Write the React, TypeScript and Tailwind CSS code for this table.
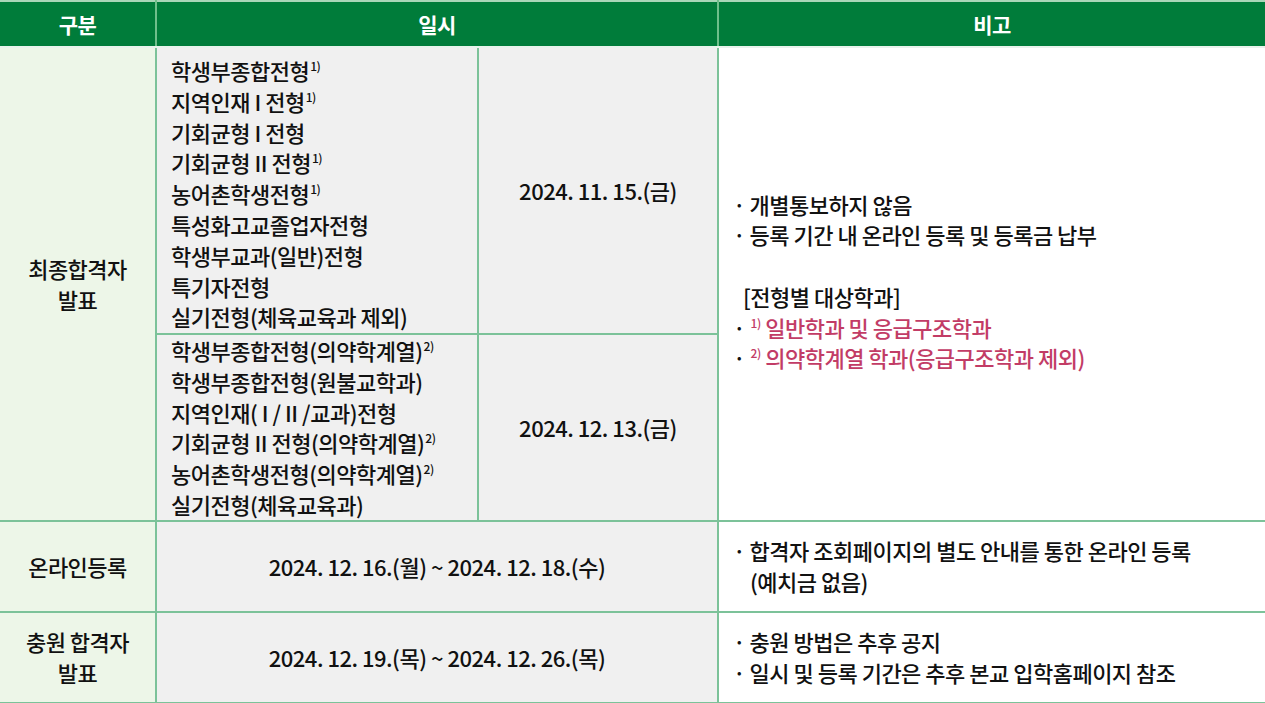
import React from "react";

const B = "border-2 border-[#7cc299]";
const font = { fontFamily: '"Noto Sans CJK KR", "Noto Sans", sans-serif' };

function Sup({ n }: { n: string }) {
  return <span className="text-[12px] leading-none relative -top-[9px] ml-[1px]">{n})</span>;
}

export default function App() {
  const list1: [string, string?][] = [
    ["학생부종합전형", "1"],
    ["지역인재 I 전형", "1"],
    ["기회균형 I 전형"],
    ["기회균형 II 전형", "1"],
    ["농어촌학생전형", "1"],
    ["특성화고교졸업자전형"],
    ["학생부교과(일반)전형"],
    ["특기자전형"],
    ["실기전형(체육교육과 제외)"],
  ];
  const list2: [string, string?][] = [
    ["학생부종합전형(의약학계열)", "2"],
    ["학생부종합전형(원불교학과)"],
    ["지역인재( I / II /교과)전형"],
    ["기회균형 II 전형(의약학계열)", "2"],
    ["농어촌학생전형(의약학계열)", "2"],
    ["실기전형(체육교육과)"],
  ];
  return (
    <div className="w-[1265px] h-[703px] bg-white overflow-hidden text-[#111] tracking-[-0.5px]" style={font}>
      <table className="table-fixed border-collapse w-[1265px] text-[22px] leading-[30.8px] font-medium">
        <colgroup>
          <col className="w-[156px]" />
          <col className="w-[322px]" />
          <col className="w-[240px]" />
          <col className="w-[547px]" />
        </colgroup>
        <thead>
          <tr className="h-[46px] bg-[#007c3a] text-white border-t-2 border-t-[#a9d6b8]">
            <th className="font-bold text-[21px] border-r-2 border-r-[#6fbf8b] border-b-2 border-b-[#e8f3ec]">구분</th>
            <th colSpan={2} className="font-bold text-[21px] border-r-2 border-r-[#6fbf8b] border-b-2 border-b-[#e8f3ec]">일시</th>
            <th className="font-bold text-[21px] border-b-2 border-b-[#e8f3ec]">비고</th>
          </tr>
        </thead>
        <tbody>
          <tr className="h-[287px]">
            <td rowSpan={2} className={`${B} border-l-0 bg-[#edf6e8] text-center align-middle`}>
              최종합격자
              <br />
              발표
            </td>
            <td className={`${B} bg-[#f0f0f0] align-top pl-[14px] pt-[7px]`}>
              {list1.map(([t, s], i) => (
                <div key={i} className="whitespace-nowrap">
                  {t}
                  {s && <Sup n={s} />}
                </div>
              ))}
            </td>
            <td className={`${B} bg-[#f0f0f0] text-center align-middle`}>2024. 11. 15.(금)</td>
            <td rowSpan={2} className={`${B} border-r-0 bg-white align-middle pl-[14px] pb-[6px]`}>
              <div>· 개별통보하지 않음</div>
              <div>· 등록 기간 내 온라인 등록 및 등록금 납부</div>
              <div>&nbsp;</div>
              <div className="pl-[10px]">[전형별 대상학과]</div>
              <div>
                · <span className="text-[#c23c66]"><Sup n="1" /> 일반학과 및 응급구조학과</span>
              </div>
              <div>
                · <span className="text-[#c23c66]"><Sup n="2" /> 의약학계열 학과(응급구조학과 제외)</span>
              </div>
            </td>
          </tr>
          <tr className="h-[186px]">
            <td className={`${B} bg-[#f0f0f0] align-middle pl-[14px]`}>
              {list2.map(([t, s], i) => (
                <div key={i} className="whitespace-nowrap">
                  {t}
                  {s && <Sup n={s} />}
                </div>
              ))}
            </td>
            <td className={`${B} bg-[#f0f0f0] text-center align-middle`}>2024. 12. 13.(금)</td>
          </tr>
          <tr className="h-[91px]">
            <td className={`${B} border-l-0 bg-[#edf6e8] text-center align-middle`}>온라인등록</td>
            <td colSpan={2} className={`${B} bg-[#f0f0f0] text-center align-middle`}>
              2024. 12. 16.(월) ~ 2024. 12. 18.(수)
            </td>
            <td className={`${B} border-r-0 bg-white align-middle pl-[14px]`}>
              <div>· 합격자 조회페이지의 별도 안내를 통한 온라인 등록</div>
              <div className="pl-[17px]">(예치금 없음)</div>
            </td>
          </tr>
          <tr className="h-[91px]">
            <td className={`${B} border-l-0 bg-[#edf6e8] text-center align-middle`}>
              충원 합격자
              <br />
              발표
            </td>
            <td colSpan={2} className={`${B} bg-[#f0f0f0] text-center align-middle`}>
              2024. 12. 19.(목) ~ 2024. 12. 26.(목)
            </td>
            <td className={`${B} border-r-0 bg-white align-middle pl-[14px]`}>
              <div>· 충원 방법은 추후 공지</div>
              <div>· 일시 및 등록 기간은 추후 본교 입학홈페이지 참조</div>
            </td>
          </tr>
        </tbody>
      </table>
    </div>
  );
}
